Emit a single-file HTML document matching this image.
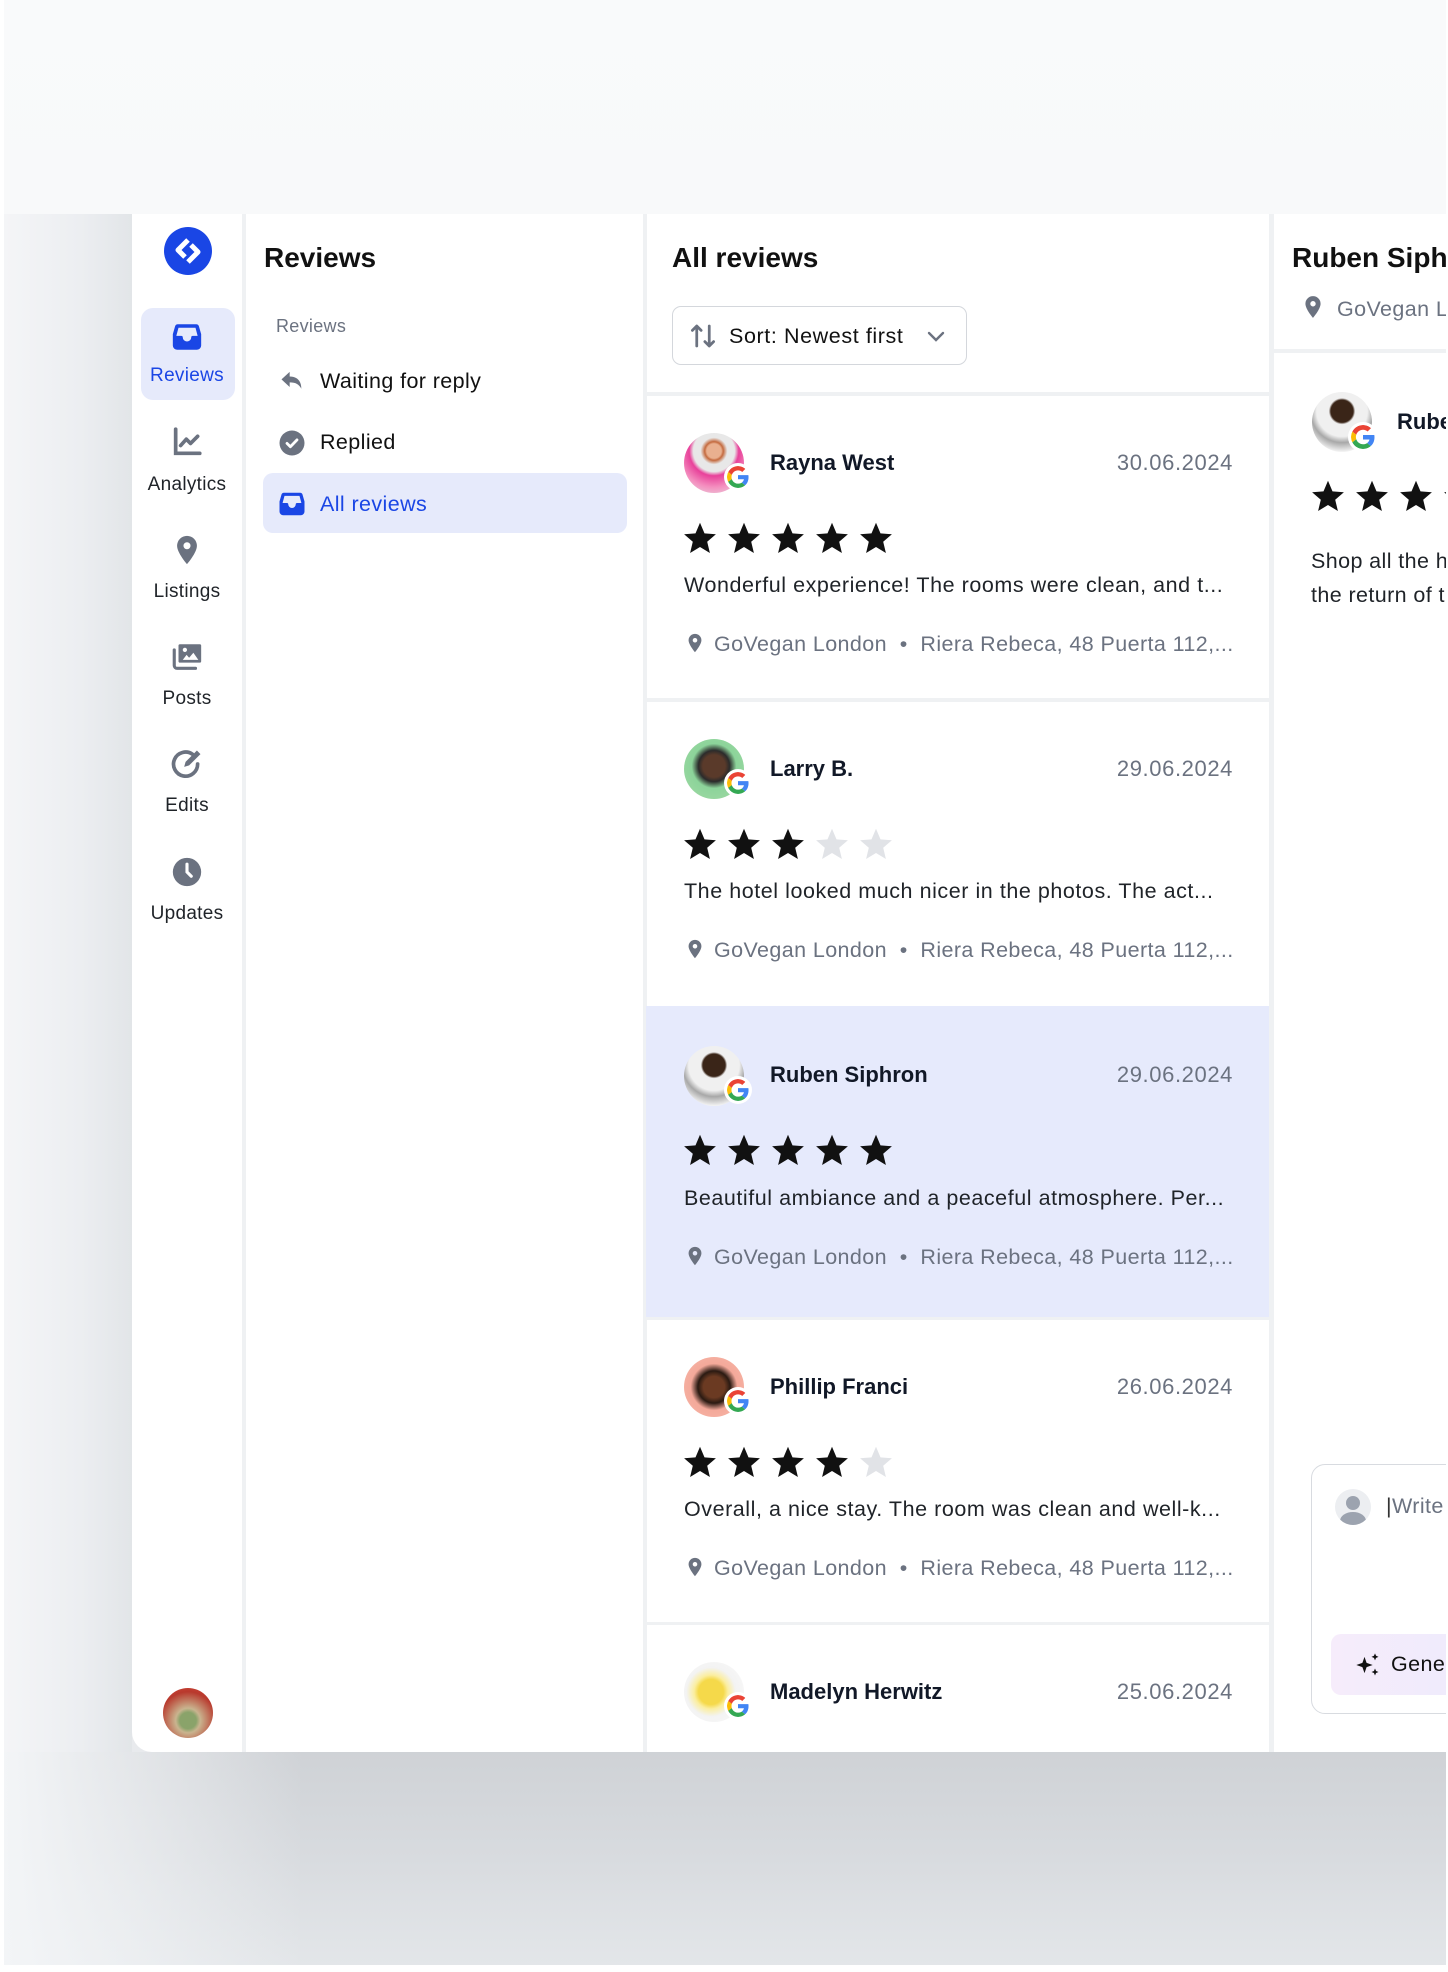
<!DOCTYPE html>
<html><head><meta charset="utf-8">
<style>
*{margin:0;padding:0;box-sizing:border-box}
body{width:1448px;height:1972px;background:#fff;position:relative;overflow:hidden;font-family:"Liberation Sans",Arial,sans-serif;color:#111827}
.abs{position:absolute}
#frame{left:4px;top:0;width:1442px;height:1965px;background:linear-gradient(180deg,#f9fafb 0%,#f4f5f7 50%,#e9ebee 85%,#e6e8eb 100%);}
#shadowL{left:4px;top:214px;width:128px;height:1751px;background:linear-gradient(90deg,#f4f5f7 0%,#eceef1 60%,#e2e5e8 100%)}
#shadowB{left:4px;top:1752px;width:1442px;height:213px;background:linear-gradient(180deg,#cfd2d6 0%,#d8dbdf 50%,#e3e6e9 100%)}
#shadowB2{left:4px;top:1752px;width:300px;height:213px;background:linear-gradient(90deg,#f3f5f7 0%,rgba(243,245,247,0) 100%)}
#card{left:132px;top:214px;width:1314px;height:1538px;background:#fff;border-radius:0 0 0 20px;overflow:hidden}
.sep{background:#eff1f3}
.navlbl{position:absolute;width:110px;left:0;text-align:center;font-size:19px;color:#1f2328;letter-spacing:0.3px}
.navic{position:absolute;left:38px;width:34px;height:34px}
.h1{font-size:28px;font-weight:bold;color:#111}
.rv{position:absolute;left:514px;width:623px;height:304px}
.rv .av{position:absolute;left:38px;top:37px;width:60px;height:60px;border-radius:50%}
.rv .g{position:absolute;left:78px;top:67px;width:28px;height:28px;border-radius:50%;background:#fff;padding:3px}
.rv .nm{position:absolute;left:124px;top:54px;font-size:22px;font-weight:bold;color:#111827}
.rv .dt{position:absolute;right:36px;top:54px;font-size:22px;color:#6b7280;letter-spacing:0.6px}
.rv .st{position:absolute;left:36px;top:124px;height:36px}
.rv .tx{position:absolute;left:38px;top:177px;font-size:21.5px;color:#1f2328;white-space:nowrap;letter-spacing:0.55px}
.rv .lc{position:absolute;left:38px;top:236px;font-size:21.5px;color:#6b7280;white-space:nowrap;letter-spacing:0.4px}
.rv .lc svg{vertical-align:-3px;margin-right:8px}
.it{font-size:21.5px;letter-spacing:0.4px}
</style></head><body>
<div id="frame" class="abs"></div>
<div id="shadowL" class="abs"></div>
<div id="shadowB" class="abs"></div>
<div id="shadowB2" class="abs"></div>

<svg width="0" height="0" style="position:absolute">
<defs>
<symbol id="star" viewBox="0 0 24 24"><path d="M12 1.8l3 7.1 7.6.6-5.8 5 1.8 7.5L12 18 5.4 22l1.8-7.5-5.8-5 7.6-.6z"/></symbol>
<symbol id="gg" viewBox="0 0 48 48">
<path fill="#EA4335" d="M24 9.5c3.54 0 6.71 1.22 9.21 3.6l6.85-6.85C35.9 2.38 30.47 0 24 0 14.62 0 6.510 5.38 2.56 13.22l7.98 6.19C12.43 13.72 17.74 9.5 24 9.5z"/>
<path fill="#4285F4" d="M46.98 24.55c0-1.57-.15-3.09-.38-4.55H24v9.02h12.94c-.58 2.96-2.26 5.48-4.78 7.18l7.73 6c4.51-4.18 7.09-10.36 7.09-17.65z"/>
<path fill="#FBBC05" d="M10.53 28.59c-.48-1.450-.76-2.99-.76-4.59s.27-3.14.76-4.59l-7.98-6.19C.92 16.46 0 20.12 0 24c0 3.88.92 7.54 2.56 10.78l7.970-6.19z"/>
<path fill="#34A853" d="M24 48c6.48 0 11.930-2.13 15.89-5.81l-7.73-6c-2.15 1.45-4.92 2.3-8.16 2.3-6.26 0-11.57-4.22-13.47-9.91l-7.98 6.19C6.51 42.62 14.62 48 24 48z"/>
</symbol>
<symbol id="pin" viewBox="0 0 24 24"><path fill="#6b7280" d="M12 2a7 7 0 0 0-7 7c0 5 7 13 7 13s7-8 7-13a7 7 0 0 0-7-7zm0 9.5a2.5 2.5 0 1 1 0-5 2.5 2.5 0 0 1 0 5z"/></symbol>
<symbol id="tray" viewBox="0 0 24 24"><path fill="#1a46e5" d="M5.5 3h13a2 2 0 0 1 1.9 1.4L22 10v8a3 3 0 0 1-3 3H5a3 3 0 0 1-3-3v-8l1.6-5.6A2 2 0 0 1 5.5 3zM4.5 11v.2l.1 0H8a1 1 0 0 1 1 1 3 3 0 0 0 6 0 1 1 0 0 1 1-1h3.5L18 5.5H6z"/></symbol>
</defs></svg>

<div id="card" class="abs">
  <div class="abs sep" style="left:110px;top:0;width:4px;height:1538px"></div>
  <div class="abs" style="left:32px;top:13px;width:48px;height:48px;border-radius:50%;background:#1a46e5">
    <svg width="48" height="48" viewBox="0 0 48 48"><path d="M24 13l-10 10 7 7M24 35l10-10-7-7" stroke="#fff" stroke-width="5" fill="none" stroke-linejoin="round"/></svg>
  </div>
  <div class="abs" style="left:9px;top:94px;width:94px;height:92px;border-radius:12px;background:#e6eafb"></div>
  <svg class="navic" style="top:106px" viewBox="0 0 24 24"><use href="#tray"/></svg>
  <div class="navlbl" style="top:151px;color:#1a46e5">Reviews</div>
  <svg class="navic" style="top:211px" viewBox="0 0 24 24"><path d="M4 3v17h17" stroke="#6b7280" stroke-width="2.6" fill="none" stroke-linecap="round"/><path d="M7.5 14.5l4-4.5 3 3 5-5" stroke="#6b7280" stroke-width="2.6" fill="none" stroke-linecap="round" stroke-linejoin="round"/></svg>
  <div class="navlbl" style="top:260px">Analytics</div>
  <svg class="navic" style="top:319px" viewBox="0 0 24 24"><use href="#pin"/></svg>
  <div class="navlbl" style="top:367px">Listings</div>
  <svg class="navic" style="top:426px" viewBox="0 0 24 24"><path fill="#6b7280" d="M7 3h14a1 1 0 0 1 1 1v11a1 1 0 0 1-1 1H7a1 1 0 0 1-1-1V4a1 1 0 0 1 1-1zm2 11h11l-3.5-5-3 3.5-1.8-2z"/><circle cx="10.5" cy="7" r="1.5" fill="#fff"/><path d="M3 7v11a2 2 0 0 0 2 2h13" stroke="#6b7280" stroke-width="2.2" fill="none" stroke-linecap="round"/></svg>
  <div class="navlbl" style="top:474px">Posts</div>
  <svg class="navic" style="top:533px" viewBox="0 0 24 24"><path d="M16 5.2A8.5 8.5 0 1 0 19.5 12" stroke="#6b7280" stroke-width="2.6" fill="none" stroke-linecap="round"/><path fill="#6b7280" d="M19 2.5l2.5 2.5-8 8-3.5 1 1-3.5z"/></svg>
  <div class="navlbl" style="top:581px">Edits</div>
  <svg class="navic" style="top:641px" viewBox="0 0 24 24"><circle cx="12" cy="12" r="10" fill="#6b7280"/><path d="M12 6.5V12l3 3" stroke="#fff" stroke-width="2.2" fill="none" stroke-linecap="round"/></svg>
  <div class="navlbl" style="top:689px">Updates</div>
  <div class="abs" style="left:31px;top:1474px;width:50px;height:50px;border-radius:50%;background:radial-gradient(circle at 50% 65%,#8aa36a 0 20%,#c9b48f 30%,#b8392d 70%,#d8483a 100%)"></div>

  <div class="abs sep" style="left:511px;top:0;width:4px;height:1538px"></div>
  <div class="abs h1" style="left:132px;top:28px">Reviews</div>
  <div class="abs" style="left:144px;top:102px;font-size:18px;color:#6b7280;letter-spacing:0.3px">Reviews</div>
  <svg class="abs" style="left:146px;top:152px" width="28" height="28" viewBox="0 0 24 24"><path fill="#6b7280" d="M10 5L3 11.5 10 18v-4c5 0 8 1.5 10 5.5 0-6-3-10.5-10-10.5z"/></svg>
  <div class="abs it" style="left:188px;top:155px;color:#111">Waiting for reply</div>
  <svg class="abs" style="left:145px;top:214px" width="30" height="30" viewBox="0 0 24 24"><circle cx="12" cy="12" r="10" fill="#6b7280"/><path d="M8 12.3l2.7 2.7L16 9.5" stroke="#fff" stroke-width="2.2" fill="none" stroke-linecap="round" stroke-linejoin="round"/></svg>
  <div class="abs it" style="left:188px;top:216px;color:#111">Replied</div>
  <div class="abs" style="left:131px;top:259px;width:364px;height:60px;border-radius:10px;background:#e6eafb"></div>
  <svg class="abs" style="left:145px;top:275px" width="30" height="30" viewBox="0 0 24 24"><use href="#tray"/></svg>
  <div class="abs it" style="left:188px;top:278px;color:#1a46e5">All reviews</div>

  <div class="abs sep" style="left:1137px;top:0;width:5px;height:1538px"></div>
  <div class="abs h1" style="left:540px;top:28px">All reviews</div>
  <div class="abs" style="left:540px;top:92px;width:295px;height:59px;border:1.5px solid #d4d7dc;border-radius:9px;background:#fff"></div>
  <svg class="abs" style="left:556px;top:107px" width="30" height="30" viewBox="0 0 24 24"><path d="M7 20V4M3.5 7.5L7 4l3.5 3.5M17 4v16M13.5 16.5L17 20l3.5-3.5" stroke="#6b7280" stroke-width="2.2" fill="none" stroke-linecap="round" stroke-linejoin="round"/></svg>
  <div class="abs it" style="left:597px;top:110px;color:#111;letter-spacing:0.6px">Sort: Newest first</div>
  <svg class="abs" style="left:792px;top:110px" width="24" height="24" viewBox="0 0 24 24"><path d="M5 9l7 7 7-7" stroke="#6b7280" stroke-width="2.4" fill="none" stroke-linecap="round"/></svg>
  <div class="abs sep" style="left:514px;top:178px;width:623px;height:4px"></div>

  <div class="rv" style="top:182px">
    <div class="av" style="background:radial-gradient(circle at 50% 30%,#e9b08f 0 14%,#c46a3e 18%,#e8e8e8 26%,#e8e8e8 40%,#e8419a 48%,#f48fbf 70%,#e6e6e6 100%)"></div>
    <svg class="g"><use href="#gg"/></svg>
    <div class="nm">Rayna West</div><div class="dt">30.06.2024</div>
    <svg class="st" width="220" height="36"><use href="#star" x="0" width="36" height="36" fill="#111"/><use href="#star" x="44" width="36" height="36" fill="#111"/><use href="#star" x="88" width="36" height="36" fill="#111"/><use href="#star" x="132" width="36" height="36" fill="#111"/><use href="#star" x="176" width="36" height="36" fill="#111"/></svg>
    <div class="tx">Wonderful experience! The rooms were clean, and t...</div>
    <div class="lc"><svg width="22" height="22"><use href="#pin"/></svg>GoVegan London &nbsp;•&nbsp; Riera Rebeca, 48 Puerta 112,...</div>
  </div>
  <div class="abs sep" style="left:514px;top:484px;width:623px;height:4px"></div>
  <div class="rv" style="top:488px">
    <div class="av" style="background:radial-gradient(circle at 50% 45%,#5a3a2a 0 25%,#2b2b2b 35%,#8cd49a 50%,#a3d9a5 100%)"></div>
    <svg class="g"><use href="#gg"/></svg>
    <div class="nm">Larry B.</div><div class="dt">29.06.2024</div>
    <svg class="st" width="220" height="36"><use href="#star" x="0" width="36" height="36" fill="#111"/><use href="#star" x="44" width="36" height="36" fill="#111"/><use href="#star" x="88" width="36" height="36" fill="#111"/><use href="#star" x="132" width="36" height="36" fill="#e1e3e7"/><use href="#star" x="176" width="36" height="36" fill="#e1e3e7"/></svg>
    <div class="tx">The hotel looked much nicer in the photos. The act...</div>
    <div class="lc"><svg width="22" height="22"><use href="#pin"/></svg>GoVegan London &nbsp;•&nbsp; Riera Rebeca, 48 Puerta 112,...</div>
  </div>
  <div class="rv" style="top:792px;height:311px;background:#e6eafc">
    <div class="av" style="top:40px;background:radial-gradient(circle at 50% 32%,#3a2518 0 22%,#f0f0f0 26%,#f0f0f0 50%,#a8a8a8 62%,#f3f3f3 80%)"></div>
    <svg class="g" style="top:70px"><use href="#gg"/></svg>
    <div class="nm" style="top:56px">Ruben Siphron</div><div class="dt" style="top:56px">29.06.2024</div>
    <svg class="st" style="top:126px" width="220" height="36"><use href="#star" x="0" width="36" height="36" fill="#111"/><use href="#star" x="44" width="36" height="36" fill="#111"/><use href="#star" x="88" width="36" height="36" fill="#111"/><use href="#star" x="132" width="36" height="36" fill="#111"/><use href="#star" x="176" width="36" height="36" fill="#111"/></svg>
    <div class="tx" style="top:180px">Beautiful ambiance and a peaceful atmosphere. Per...</div>
    <div class="lc" style="top:239px"><svg width="22" height="22"><use href="#pin"/></svg>GoVegan London &nbsp;•&nbsp; Riera Rebeca, 48 Puerta 112,...</div>
  </div>
  <div class="abs sep" style="left:514px;top:1103px;width:623px;height:3px"></div>
  <div class="rv" style="top:1106px">
    <div class="av" style="background:radial-gradient(circle at 50% 50%,#6b3a22 0 25%,#2a1a12 38%,#f4a99a 55%,#f7b8aa 100%)"></div>
    <svg class="g"><use href="#gg"/></svg>
    <div class="nm">Phillip Franci</div><div class="dt">26.06.2024</div>
    <svg class="st" width="220" height="36"><use href="#star" x="0" width="36" height="36" fill="#111"/><use href="#star" x="44" width="36" height="36" fill="#111"/><use href="#star" x="88" width="36" height="36" fill="#111"/><use href="#star" x="132" width="36" height="36" fill="#111"/><use href="#star" x="176" width="36" height="36" fill="#e1e3e7"/></svg>
    <div class="tx">Overall, a nice stay. The room was clean and well-k...</div>
    <div class="lc"><svg width="22" height="22"><use href="#pin"/></svg>GoVegan London &nbsp;•&nbsp; Riera Rebeca, 48 Puerta 112,...</div>
  </div>
  <div class="abs sep" style="left:514px;top:1408px;width:623px;height:3px"></div>
  <div class="rv" style="top:1411px">
    <div class="av" style="background:radial-gradient(circle at 45% 50%,#f5d94a 0 28%,#fbeea0 38%,#f3f3f3 55%,#fafafa 100%)"></div>
    <svg class="g"><use href="#gg"/></svg>
    <div class="nm">Madelyn Herwitz</div><div class="dt">25.06.2024</div>
  </div>

  <div class="abs h1" style="left:1160px;top:28px;white-space:nowrap">Ruben Siphron</div>
  <svg class="abs" style="left:1168px;top:80px" width="26" height="26"><use href="#pin"/></svg>
  <div class="abs it" style="left:1205px;top:83px;color:#6b7280;white-space:nowrap">GoVegan London</div>
  <div class="abs sep" style="left:1142px;top:135px;width:200px;height:4px"></div>
  <div class="abs" style="left:1180px;top:178px;width:60px;height:60px;border-radius:50%;background:radial-gradient(circle at 50% 32%,#3a2518 0 22%,#f0f0f0 26%,#f0f0f0 50%,#a8a8a8 62%,#f3f3f3 80%)"></div>
  <svg class="abs" style="left:1216px;top:208px;width:30px;height:30px;background:#fff;border-radius:50%;padding:3px"><use href="#gg"/></svg>
  <div class="abs" style="left:1265px;top:195px;font-size:22px;font-weight:bold;white-space:nowrap">Ruben Siphron</div>
  <svg class="abs" style="left:1178px;top:264px" width="200" height="36"><use href="#star" x="0" width="36" height="36" fill="#111"/><use href="#star" x="44" width="36" height="36" fill="#111"/><use href="#star" x="88" width="36" height="36" fill="#111"/><use href="#star" x="132" width="36" height="36" fill="#111"/></svg>
  <div class="abs it" style="left:1179px;top:330px;line-height:34px;color:#1f2328;white-space:nowrap">Shop all the hottest<br>the return of the</div>
  <div class="abs" style="left:1179px;top:1250px;width:200px;height:250px;border:1.5px solid #d8dbe0;border-radius:14px;background:#fff"></div>
  <div class="abs" style="left:1203px;top:1275px;width:36px;height:36px;border-radius:50%;background:#eceef1;overflow:hidden">
    <div class="abs" style="left:11px;top:7px;width:14px;height:14px;border-radius:50%;background:#9ca3af"></div>
    <div class="abs" style="left:5px;top:23px;width:26px;height:18px;border-radius:50%;background:#9ca3af"></div>
  </div>
  <div class="abs it" style="left:1254px;top:1280px;color:#6b7280;white-space:nowrap"><span style="color:#333">|</span>Write a reply</div>
  <div class="abs" style="left:1199px;top:1420px;width:180px;height:61px;border-radius:10px;background:linear-gradient(90deg,#f6ecfb,#eceafc)"></div>
  <svg class="abs" style="left:1222px;top:1437px" width="28" height="28" viewBox="0 0 24 24"><path fill="#111" d="M9 5l1.8 5.2L16 12l-5.2 1.8L9 19l-1.8-5.2L2 12l5.2-1.8zM18 2l.9 2.1L21 5l-2.1.9L18 8l-.9-2.1L15 5l2.1-.9zM18 15l.9 2.1 2.1.9-2.1.9L18 21l-.9-2.1L15 18l2.1-.9z"/></svg>
  <div class="abs it" style="left:1259px;top:1438px;color:#111;white-space:nowrap">Generate reply</div>
</div>
</body></html>
